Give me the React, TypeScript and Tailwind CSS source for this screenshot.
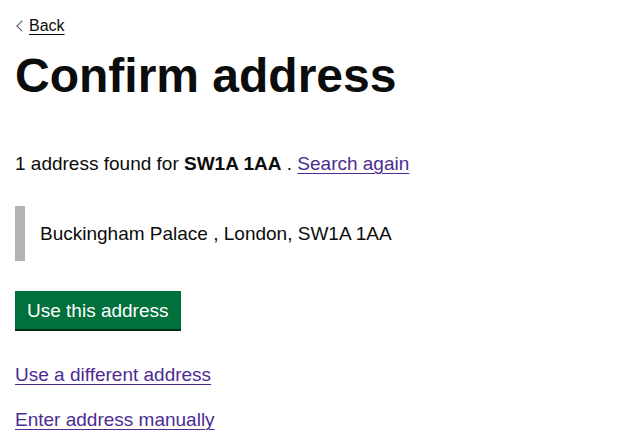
export default function App() {
  return (
    <div className="min-h-screen bg-white px-[15px] font-['Liberation_Sans',Arial,sans-serif] text-[#0b0c0c] antialiased">
      {/* Back link */}
      <a
        href="#"
        className="relative mt-[16px] mb-[15px] inline-block pl-[14px] text-[16px] leading-[20px] text-[#0b0c0c] underline decoration-1 underline-offset-[0.1578em]"
      >
        <span className="absolute left-[3px] top-0 bottom-0 my-auto h-[8px] w-[8px] -rotate-45 border-l border-t border-[#505a5f]" />
        Back
      </a>

      <h1 className="mb-[50px] text-[48px] font-bold leading-[50px]">Confirm address</h1>

      <p className="mb-[20px] text-[19px] leading-[25px]">
        1 address found for <strong className="font-bold">SW1A 1AA</strong> .{' '}
        <a href="#" className="text-[#4c2c92] underline decoration-1 underline-offset-[0.1578em]">
          Search again
        </a>
      </p>

      {/* Inset */}
      <div className="mt-[30px] mb-[30px] border-l-[10px] border-[#b1b4b6] p-[15px] text-[19px] leading-[25px]">
        Buckingham Palace , London, SW1A 1AA
      </div>

      <button className="mb-[33px] block w-fit border-2 border-transparent bg-[#00703c] px-[10px] pt-[8px] pb-[7px] text-[19px] leading-[19px] text-white shadow-[0_2px_0_#002d18]">
        Use this address
      </button>

      <p className="mb-[20px] text-[19px] leading-[25px]">
        <a href="#" className="text-[#4c2c92] underline decoration-1 underline-offset-[0.1578em]">
          Use a different address
        </a>
      </p>
      <p className="mb-[20px] text-[19px] leading-[25px]">
        <a href="#" className="text-[#4c2c92] underline decoration-1 underline-offset-[0.1578em]">
          Enter address manually
        </a>
      </p>
    </div>
  );
}
